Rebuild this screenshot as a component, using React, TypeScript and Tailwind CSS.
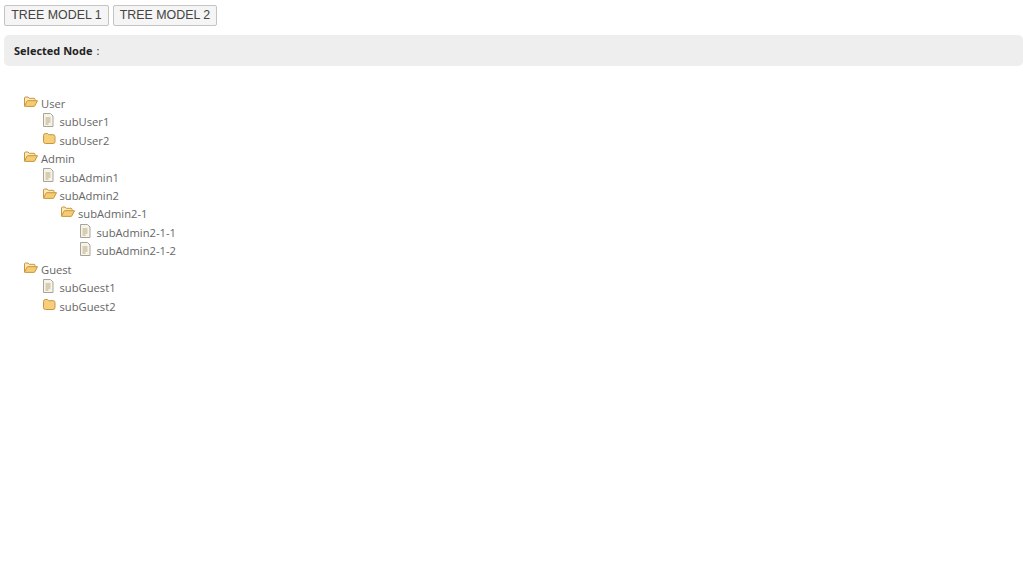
interface TreeNode {
  label: string;
  icon: "open" | "closed" | "file";
  children?: TreeNode[];
}

const tree: TreeNode[] = [
  {
    label: "User",
    icon: "open",
    children: [
      { label: "subUser1", icon: "file" },
      { label: "subUser2", icon: "closed" },
    ],
  },
  {
    label: "Admin",
    icon: "open",
    children: [
      { label: "subAdmin1", icon: "file" },
      {
        label: "subAdmin2",
        icon: "open",
        children: [
          {
            label: "subAdmin2-1",
            icon: "open",
            children: [
              { label: "subAdmin2-1-1", icon: "file" },
              { label: "subAdmin2-1-2", icon: "file" },
            ],
          },
        ],
      },
    ],
  },
  {
    label: "Guest",
    icon: "open",
    children: [
      { label: "subGuest1", icon: "file" },
      { label: "subGuest2", icon: "closed" },
    ],
  },
];

function NodeIcon({ icon }: { icon: TreeNode["icon"] }) {
  if (icon === "file") {
    return (
      <svg width="14" height="16" viewBox="1 0 14 16" className="mt-[-5px] mr-[3px] shrink-0">
        <path d="M1.500 1.500h7l2.500 2.500v10.500h-9.500z" fill="#f6f3ea" stroke="#a8a598" />
        <path d="M3.500 6h5M3.500 8h5M3.500 10h5M3.500 12h3" stroke="#b9a878" strokeWidth="1" />
      </svg>
    );
  }
  if (icon === "closed") {
    return (
      <svg width="14" height="12" viewBox="0 0 14 12" className="mt-[-5px] mr-[3px] shrink-0">
        <path
          d="M0.500 2.500a2 2 0 0 1 2-2h2l1.200 1.200h4.300a2 2 0 0 1 2 2v4.800a2 2 0 0 1-2 2h-7.500a2 2 0 0 1-2-2z"
          fill="#f5cf7c"
          stroke="#c9963c"
        />
      </svg>
    );
  }
  return (
    <svg width="15" height="12" viewBox="0 0 15 12" className="mt-[-5px] mr-[2px] shrink-0">
      <path
        d="M0.500 10v-8a1 1 0 0 1 1-1h2.500l1.200 1.300h4.800a1 1 0 0 1 1 1v1.200"
        fill="#fbe9bd"
        stroke="#c9963c"
      />
      <path d="M0.500 10.300l2.400-5a1 1 0 0 1 .9-.6h9.700l-2.700 5.200a1 1 0 0 1-.9.500h-8.600z" fill="#f5cb74" stroke="#c9963c" />
    </svg>
  );
}

function TreeRows({ nodes }: { nodes: TreeNode[] }) {
  return (
    <ul>
      {nodes.map((node) => (
        <li key={node.label}>
          <div className="flex h-[18.45px] items-center">
            <NodeIcon icon={node.icon} />
            <span className="text-[11.200px] text-[#666] font-['Open_Sans',sans-serif]">{node.label}</span>
          </div>
          {node.children && (
            <div className="pl-[18.500px]">
              <TreeRows nodes={node.children} />
            </div>
          )}
        </li>
      ))}
    </ul>
  );
}

export default function App() {
  return (
    <div className="min-h-screen bg-white pl-1 pt-[5px] font-['Liberation_Sans',sans-serif]">
      <div className="flex gap-1">
        <button className="h-[21px] w-[105px] rounded-[2px] border border-[#c4c4c4] bg-[#f5f5f5] text-[12.400px] text-[#444]">
          TREE MODEL 1
        </button>
        <button className="h-[21px] w-[104px] rounded-[2px] border border-[#c4c4c4] bg-[#f5f5f5] text-[12.400px] text-[#444]">
          TREE MODEL 2
        </button>
      </div>
      <div className="mt-[9px] flex h-[31px] items-center rounded-[5px] bg-[#eeeeee] pl-2.5 pt-[1px] text-[11px] text-[#222] font-['Open_Sans',sans-serif]">
        <b>Selected Node</b>
        <span className="ml-1">:</span>
      </div>
      <div className="mt-[29px] pl-5">
        <TreeRows nodes={tree} />
      </div>
    </div>
  );
}
